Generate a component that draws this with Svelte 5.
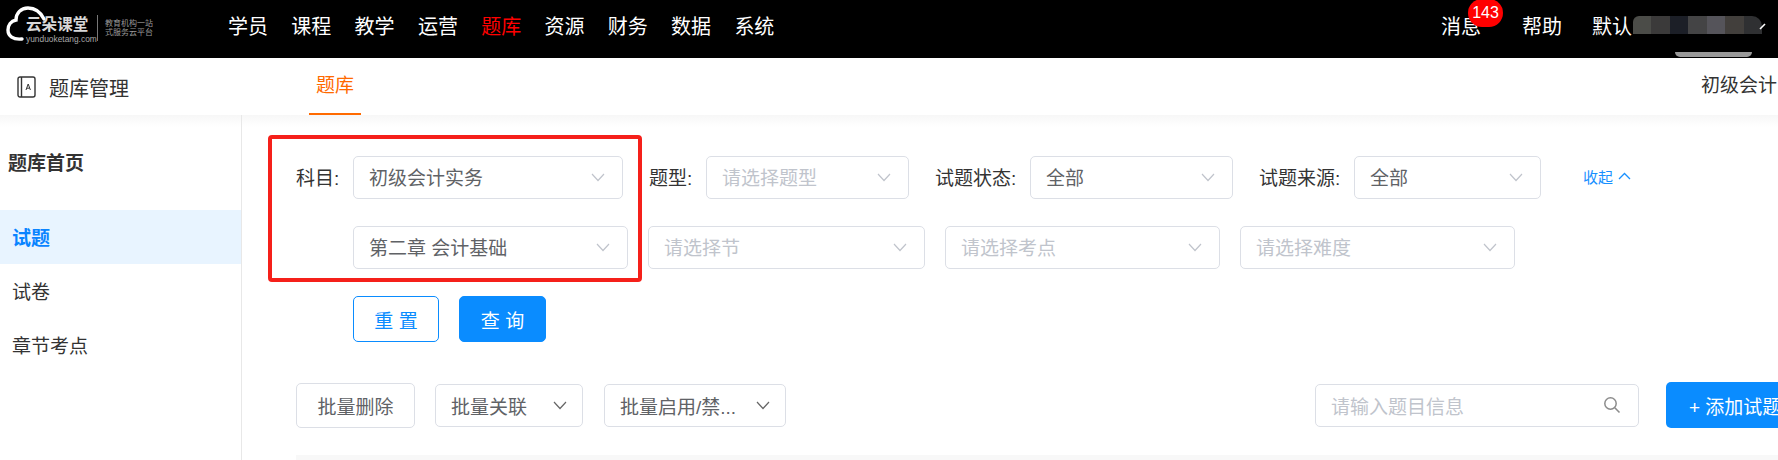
<script>
  const navItems = ["学员", "课程", "教学", "运营", "题库", "资源", "财务", "数据", "系统"];
  const mosaic = ["#4b4c48", "#3b3a3a", "#1c1f27", "#444445", "#55545a", "#423f3c", "#2f3032"];
  const sideItems = [
    { label: "试题", active: true },
    { label: "试卷", active: false },
    { label: "章节考点", active: false }
  ];
</script>

{#snippet chevron(dark)}
  <svg class="chevron" class:dark width="14" height="9" viewBox="0 0 14 9">
    <path d="M1 1l6 6.5L13 1" fill="none" stroke="currentColor" stroke-width="1.2" />
  </svg>
{/snippet}

{#snippet select(text, placeholder, cls)}
  <div class="select {cls}">
    <span class:placeholder>{text}</span>
    {@render chevron(false)}
  </div>
{/snippet}

<div class="page">
  <header class="topbar">
    <div class="logo">
      <svg class="cloud" width="50" height="44" viewBox="0 0 50 44">
        <path
          d="M22 39C13 40 8 36 8 30c0-5 3-9 8-10C16 13 21 8 28 8c8 0 13 5 16 11"
          fill="none"
          stroke="#fff"
          stroke-width="3.4"
          stroke-linecap="round"
        />
      </svg>
      <div class="brand">
        <strong>云朵课堂</strong>
        <small>yunduoketang.com</small>
      </div>
      <div class="slogan">
        <span>教育机构一站</span>
        <span>式服务云平台</span>
      </div>
    </div>
    <nav class="nav">
      {#each navItems as item}
        <span class:on={item === "题库"}>{item}</span>
      {/each}
    </nav>
    <div class="tools">
      <span class="msg">消息<b class="badge">143</b></span>
      <span class="help">帮助</span>
      <span class="user">
        默认
        <span class="blur">
          <span class="blur-row">
            {#each mosaic as color}
              <i style:background={color}></i>
            {/each}
          </span>
          <em></em>
        </span>
        <svg class="tick" width="8" height="7" viewBox="0 0 8 7">
          <path d="M1 6l5-5" stroke="#fff" stroke-width="1.6" />
        </svg>
      </span>
    </div>
  </header>

  <div class="subbar">
    <div class="subtitle">
      <svg width="20" height="22" viewBox="0 0 20 22">
        <rect x="1" y="1" width="17" height="20" rx="2" fill="none" stroke="#333" stroke-width="1.4" />
        <path d="M4.5 1v20" stroke="#333" stroke-width="1.4" />
        <path d="M9 14l2.2-6 2.2 6M9.8 12.2h2.8" fill="none" stroke="#333" stroke-width="1" />
      </svg>
      <span>题库管理</span>
    </div>
    <div class="tab">题库</div>
    <div class="subject">初级会计</div>
  </div>

  <div class="body">
    <aside class="side">
      <h2>题库首页</h2>
      <ul>
        {#each sideItems as item}
          <li class:active={item.active}>{item.label}</li>
        {/each}
      </ul>
    </aside>

    <main class="main">
      <div class="annotation"></div>

      <div class="row row-one">
        <span class="lab lab-km">科目:</span>
        {@render select("初级会计实务", false, "w270")}
        <span class="lab lab-tx">题型:</span>
        {@render select("请选择题型", true, "w203")}
        <span class="lab lab-zt">试题状态:</span>
        {@render select("全部", false, "w203")}
        <span class="lab lab-ly">试题来源:</span>
        {@render select("全部", false, "w187")}
        <span class="fold">收起
          <svg width="13" height="8" viewBox="0 0 13 8">
            <path d="M1 7l5.5-5.5L12 7" fill="none" stroke="currentColor" stroke-width="1.3" />
          </svg>
        </span>
      </div>

      <div class="row row-two">
        {@render select("第二章 会计基础", false, "w275")}
        {@render select("请选择节", true, "w277")}
        {@render select("请选择考点", true, "w275")}
        {@render select("请选择难度", true, "w275")}
      </div>

      <div class="row row-btns">
        <button class="btn plain">重 置</button>
        <button class="btn primary">查 询</button>
      </div>

      <div class="actions">
        <button class="act del">批量删除</button>
        <button class="act rel">批量关联 {@render chevron(true)}</button>
        <button class="act able"><span>批量启用/禁...</span> {@render chevron(true)}</button>
        <div class="search">
          <span>请输入题目信息</span>
          <svg width="18" height="18" viewBox="0 0 18 18">
            <circle cx="7.5" cy="7.5" r="5.7" fill="none" stroke="#8c8c8c" stroke-width="1.5" />
            <path d="M11.8 11.8L16.5 16.5" stroke="#8c8c8c" stroke-width="1.6" />
          </svg>
        </div>
        <button class="add">+ 添加试题</button>
      </div>

      <div class="strip"></div>
    </main>
  </div>
</div>

<style>
  :global(body) {
    margin: 0;
    background: #fff;
  }
  .page {
    width: 1778px;
    height: 460px;
    overflow: hidden;
    display: flex;
    flex-direction: column;
    font-family: "Liberation Sans", "Noto Sans CJK SC", sans-serif;
    font-size: 19px;
    color: #333;
  }

  .topbar {
    flex: none;
    height: 58px;
    background: #000;
    color: #fff;
    font-size: 20px;
    display: flex;
    align-items: center;
    overflow: hidden;
  }
  .logo {
    position: relative;
    width: 228px;
    height: 58px;
    flex: none;
  }
  .cloud {
    position: absolute;
    left: 0;
    top: 0;
  }
  .brand {
    position: absolute;
    left: 26px;
    top: 17px;
    display: flex;
    flex-direction: column;
    line-height: 1;
  }
  .brand strong {
    font-size: 15.5px;
    letter-spacing: 0.1px;
    color: #d8d8d8;
  }
  .brand small {
    font-size: 8.4px;
    margin-top: 2px;
    color: #a8a8a8;
  }
  .slogan {
    position: absolute;
    left: 97px;
    top: 15px;
    padding-left: 7px;
    border-left: 1px solid #777;
    height: 26px;
    display: flex;
    flex-direction: column;
    justify-content: center;
    gap: 1px;
    font-size: 8px;
    line-height: 1;
    color: #999;
  }
  .nav {
    display: flex;
    gap: 23.3px;
    margin-top: -8px;
  }
  .nav .on {
    color: #f00;
  }
  .tools {
    margin-left: auto;
    width: 337px;
    flex: none;
    display: flex;
    margin-top: -8px;
  }
  .help {
    margin: 0 30px 0 41px;
  }
  .msg {
    position: relative;
  }
  .badge {
    position: absolute;
    left: 27px;
    top: -12px;
    width: 35px;
    height: 28px;
    border-radius: 15px;
    background: #f00;
    color: #fff;
    font-size: 16px;
    font-weight: 400;
    line-height: 28px;
    text-align: center;
  }
  .user {
    position: relative;
    white-space: nowrap;
  }
  .blur {
    position: absolute;
    left: 41px;
    top: 5px;
    width: 129px;
  }
  .blur-row {
    display: flex;
    height: 18px;
    border-radius: 6px 10px 0 0;
    overflow: hidden;
  }
  .blur-row i {
    flex: 1;
  }
  .blur em {
    position: absolute;
    left: 42px;
    top: 36px;
    width: 77px;
    height: 5px;
    background: #999;
    border-radius: 0 0 40px 40px;
  }
  .tick {
    position: absolute;
    left: 167px;
    top: 12px;
  }

  .subbar {
    flex: none;
    height: 57px;
    display: flex;
    align-items: center;
    position: relative;
    z-index: 1;
    white-space: nowrap;
  }
  .subtitle {
    width: 309px;
    padding-left: 17px;
    box-sizing: border-box;
    display: flex;
    align-items: center;
    gap: 12px;
    flex: none;
    font-size: 20px;
  }
  .subtitle span {
    margin-top: 2px;
  }
  .tab {
    width: 52px;
    height: 57px;
    box-sizing: border-box;
    border-bottom: 2px solid #ff6a00;
    color: #ff6a00;
    text-align: center;
    line-height: 56px;
    margin-top: -1px;
  }
  .subject {
    margin-left: auto;
    width: 77px;
    margin-top: -6px;
  }

  .body {
    flex: 1;
    display: flex;
    min-height: 0;
    background: linear-gradient(#f7f7f7, #fff 12px);
  }
  .side {
    width: 241px;
    flex: none;
    border-right: 1px solid #e8e8e8;
  }
  .side h2 {
    margin: 36px 0 34px 8px;
    font-size: 19px;
    line-height: 25px;
    font-weight: 700;
  }
  .side ul {
    margin: 0;
    padding: 0;
    list-style: none;
  }
  .side li {
    height: 54px;
    line-height: 58px;
    padding-left: 12px;
  }
  .side li.active {
    background: #e8f4ff;
    color: #0a84ff;
    font-weight: 700;
  }

  .main {
    position: relative;
    flex: 1;
    min-width: 0;
    padding: 41px 0 0 54px;
    overflow: hidden;
  }
  .annotation {
    position: absolute;
    left: 26px;
    top: 20px;
    width: 374px;
    height: 147px;
    box-sizing: border-box;
    border: 4px solid #f5201a;
    border-radius: 4px;
  }
  .row {
    display: flex;
    align-items: center;
    white-space: nowrap;
  }
  .row-two {
    margin: 27px 0 0 57px;
    gap: 20px;
  }
  .row-btns {
    margin: 27px 0 0 57px;
    gap: 20px;
  }
  .lab {
    color: #333;
    flex: none;
    margin-top: -2px;
  }
  .lab-km {
    width: 57px;
  }
  .lab-tx {
    margin-left: 26px;
    width: 57px;
  }
  .lab-zt {
    margin-left: 26px;
    width: 95px;
  }
  .lab-ly {
    margin-left: 26px;
    width: 95px;
  }
  .select {
    height: 43px;
    box-sizing: border-box;
    flex: none;
    border: 1px solid #dcdfe6;
    border-radius: 5px;
    padding: 0 17px 0 15px;
    display: flex;
    align-items: center;
    justify-content: space-between;
    color: #606266;
  }
  .select span {
    margin-top: -3px;
  }
  .select .placeholder {
    color: #c0c4cc;
  }
  .w270 {
    width: 270px;
  }
  .w275 {
    width: 275px;
  }
  .w277 {
    width: 277px;
  }
  .w203 {
    width: 203px;
  }
  .w187 {
    width: 187px;
  }
  .chevron {
    color: #c0c4cc;
    flex: none;
  }
  .chevron.dark {
    color: #666;
  }
  .fold {
    margin-left: 42px;
    font-size: 15px;
    color: #1890ff;
    display: flex;
    align-items: center;
    gap: 5px;
    margin-top: -3px;
  }
  .btn {
    height: 46px;
    border-radius: 5px;
    font-family: inherit;
    font-size: 19px;
    padding: 0;
  }
  .plain {
    width: 86px;
    background: #fff;
    border: 1px solid #0a8cff;
    color: #0a8cff;
  }
  .primary {
    width: 87px;
    background: #0a8cff;
    border: 1px solid #0a8cff;
    color: #fff;
  }
  .actions {
    display: flex;
    align-items: center;
    margin-top: 40px;
    white-space: nowrap;
  }
  .act {
    height: 43px;
    box-sizing: border-box;
    background: #fff;
    border: 1px solid #dcdfe6;
    border-radius: 5px;
    font-family: inherit;
    font-size: 19px;
    color: #606266;
    padding: 0;
    display: flex;
    align-items: center;
    flex: none;
  }
  .del {
    width: 119px;
    height: 45px;
    justify-content: center;
  }
  .rel {
    margin-left: 20px;
    width: 148px;
    padding: 0 15px;
    justify-content: space-between;
  }
  .able {
    margin-left: 21px;
    width: 182px;
    padding: 0 15px;
    justify-content: space-between;
  }
  .search {
    margin-left: 529px;
    width: 324px;
    height: 43px;
    box-sizing: border-box;
    flex: none;
    border: 1px solid #dcdfe6;
    border-radius: 5px;
    padding: 0 17px 0 15px;
    display: flex;
    align-items: center;
    justify-content: space-between;
    color: #c0c4cc;
  }
  .add {
    margin-left: 27px;
    width: 150px;
    height: 46px;
    flex: none;
    border: 0;
    border-radius: 5px;
    background: #0a8cff;
    color: #fff;
    font-family: inherit;
    font-size: 19px;
    padding: 0 0 0 23px;
    text-align: left;
  }
  .strip {
    margin-top: 27px;
    height: 12px;
    background: #f8f8f8;
  }
</style>
